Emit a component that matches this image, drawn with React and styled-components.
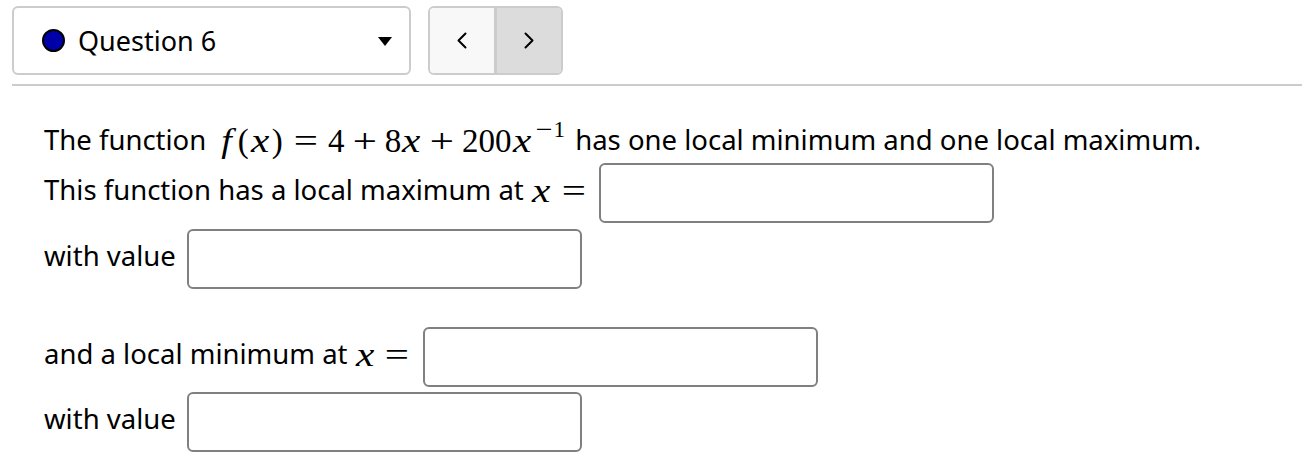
import styled, { createGlobalStyle } from 'styled-components';

const GlobalStyle = createGlobalStyle`
  html, body {
    margin: 0;
    padding: 0;
    background: #fff;
  }
  body {
    font-family: "Noto Sans", "Open Sans", sans-serif;
    color: #000;
  }
`;

const Page = styled.div`
  width: 1302px;
  height: 473px;
  overflow: hidden;
`;

const Toolbar = styled.div`
  display: flex;
  align-items: stretch;
  gap: 17px;
  margin: 6px 0 0 12px;
  height: 69px;
`;

const QuestionSelect = styled.div`
  box-sizing: border-box;
  width: 399px;
  display: flex;
  align-items: center;
  padding: 0 17px 0 28px;
  border: 2px solid #cccccc;
  border-radius: 6px;
  background: #fff;
  font-size: 27px;
`;

const StatusDot = styled.span`
  box-sizing: border-box;
  width: 23px;
  height: 23px;
  border-radius: 50%;
  border: 2px solid #000;
  background: ${props => props.$color};
  margin-right: 13px;
  flex-shrink: 0;
`;

const SelectLabel = styled.span`
  flex: 1;
  line-height: 1;
`;

const Caret = styled.span`
  width: 0;
  height: 0;
  border-left: 7.5px solid transparent;
  border-right: 7.5px solid transparent;
  border-top: 9px solid #000;
  margin-top: 2px;
`;

const NavGroup = styled.div`
  box-sizing: border-box;
  width: 135px;
  display: flex;
  border: 2px solid #cccccc;
  border-radius: 6px;
  overflow: hidden;
`;

const NavButton = styled.button`
  flex: 1;
  display: flex;
  align-items: center;
  justify-content: center;
  border: none;
  padding: 0;
  margin: 0;
  background: ${props => (props.$active ? '#dcdcdc' : '#f8f8f8')};
  border-right: ${props => (props.$divider ? '3px solid #cccccc' : 'none')};
  cursor: pointer;
`;

const Divider = styled.div`
  height: 2px;
  background: #cccccc;
  margin: 9px 0 0 12px;
`;

const Problem = styled.div`
  padding: 34px 0 0 44px;
  font-size: 27.5px;
`;

const Line = styled.div`
  line-height: 40px;
  white-space: nowrap;
  margin-top: ${props => props.$top || 0}px;
  height: ${props => (props.$tall ? '60px' : '40px')};
`;

const Math = styled.span`
  font-family: "Liberation Serif", "Times New Roman", serif;
  font-size: 33px;
  line-height: 1;
  white-space: nowrap;
  vertical-align: -2px;
  margin: 0 ${props => props.$trail || 0}px 0 ${props => props.$lead || 0}px;
`;

const Glyph = styled.span`
  display: inline-block;
  width: ${props => props.$w}em;
  text-align: center;
  font-style: ${props => (props.$italic ? 'italic' : 'normal')};
  margin: 0 ${props => props.$space || 0}em;
  transform: scaleX(${props => props.$sx || 1});
`;

const Sup = styled.span`
  font-size: 0.7em;
  vertical-align: 0.65em;
  line-height: 0;
  margin-left: 0.15em;
`;

const AnswerInput = styled.input`
  box-sizing: border-box;
  width: 395px;
  height: 60px;
  vertical-align: middle;
  margin: 0 0 0 ${props => props.$gap}px;
  border: 2px solid #808080;
  border-radius: 6px;
  background: #fff;
  font-size: 24px;
  padding: 0 10px;
`;

const ChevronIcon = ({ dir }) => (
  <svg width="12" height="17" viewBox="0 0 12 17" fill="none">
    <polyline
      points={dir === 'left' ? '9.5,1.5 2.5,8.5 9.5,15.5' : '2.5,1.5 9.5,8.5 2.5,15.5'}
      stroke="#000"
      strokeWidth="2"
      strokeLinecap="round"
      strokeLinejoin="round"
    />
  </svg>
);

const X = () => (
  <Glyph $w={0.62} $sx={1.25} $italic>
    x
  </Glyph>
);

const Rel = ({ children }) => (
  <Glyph $w={0.778} $space={0.278} $sx={1.3}>
    {children}
  </Glyph>
);

const Bin = ({ children }) => (
  <Glyph $w={0.778} $space={0.222} $sx={1.3}>
    {children}
  </Glyph>
);

const App = () => {
  return (
    <Page>
      <GlobalStyle />
      <Toolbar>
        <QuestionSelect>
          <StatusDot $color="#0000a8" />
          <SelectLabel>Question 6</SelectLabel>
          <Caret />
        </QuestionSelect>
        <NavGroup>
          <NavButton $divider aria-label="Previous question">
            <ChevronIcon dir="left" />
          </NavButton>
          <NavButton $active aria-label="Next question">
            <ChevronIcon dir="right" />
          </NavButton>
        </NavGroup>
      </Toolbar>
      <Divider />

      <Problem>
        <Line>
          The function{' '}
          <Math $lead={4} $trail={3}>
            <Glyph $w={0.58} $sx={1.15} $italic>
              f
            </Glyph>
            <Glyph $w={0.41}>(</Glyph>
            <X />
            <Glyph $w={0.41}>)</Glyph>
            <Rel>=</Rel>
            <Glyph $w={0.5}>4</Glyph>
            <Bin>+</Bin>
            <Glyph $w={0.5}>8</Glyph>
            <X />
            <Bin>+</Bin>
            <Glyph $w={1.5}>200</Glyph>
            <X />
            <Sup>
              <Glyph $w={0.778} $sx={1.3}>−</Glyph>
              <Glyph $w={0.5}>1</Glyph>
            </Sup>
          </Math>{' '}
          has one local minimum and one local maximum.
        </Line>
        <Line $top={2.6} $tall>
          This function has a local maximum at{' '}
          <Math>
            <X />
            <Rel>=</Rel>
          </Math>
          <AnswerInput $gap={4} type="text" aria-label="local maximum x" />
        </Line>
        <Line $top={6} $tall>
          with value
          <AnswerInput $gap={11} type="text" aria-label="local maximum value" />
        </Line>
        <Line $top={38} $tall>
          and a local minimum at{' '}
          <Math>
            <X />
            <Rel>=</Rel>
          </Math>
          <AnswerInput $gap={4} type="text" aria-label="local minimum x" />
        </Line>
        <Line $top={5} $tall>
          with value
          <AnswerInput $gap={11} type="text" aria-label="local minimum value" />
        </Line>
      </Problem>
    </Page>
  );
};

export default App;
